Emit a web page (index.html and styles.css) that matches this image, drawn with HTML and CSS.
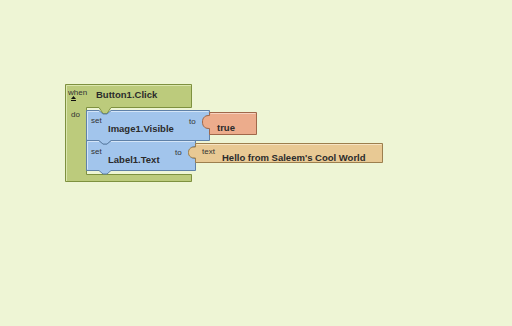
FILE: index.html
```html
<!DOCTYPE html>
<html>
<head>
    <title>Blocks Editor</title>
    <link rel="stylesheet" href="styles.css">
</head>
<body>
    <div class="workspace">
        <svg class="blocks" width="512" height="326" viewBox="0 0 512 326">
            <!-- event block: when Button1.Click do -->
            <path class="event" d="M65.5,84.5 H191.5 V107.5 H111 L107,113.5 H103 L99,107.5 H86.5 V174.5 H191.5 V181.5 H65.5 Z"/>
            <path class="hl-event" d="M66.5,181 V85.5 H191"/>
            <polygon class="arrow" points="71,99 73.5,96 76,99"/>
            <line class="arrow-bar" x1="71" y1="100.5" x2="76" y2="100.5"/>
            <text class="small" x="68" y="95">when</text>
            <text class="name" x="96" y="98">Button1.Click</text>
            <text class="small" x="71" y="117">do</text>

            <!-- set Label1.Text -->
            <path class="setter" d="M86.5,140.5 H99 L103,144 H107 L111,140.5 H195.5 V146.5 C190.5,146.5 189.5,149 189.5,152.5 C189.5,156 190.5,158.5 195.5,158.5 V170.5 H111 L107,174 H103 L99,170.5 H86.5 Z"/>
            <!-- set Image1.Visible -->
            <path class="setter" d="M86.5,110.5 H99 L103,114 H107 L111,110.5 H209.5 V115.5 C204.5,115.5 203.5,118 203.5,122 C203.5,126 204.5,128.5 209.5,128.5 V140.5 H111 L107,144 H103 L99,140.5 H86.5 Z"/>
            <path class="hl-setter" d="M87.5,139.5 V111.5 H99 M111,111.5 H208.5"/>
            <path class="hl-setter" d="M87.5,169.5 V141.5 H99 M111,141.5 H194.5"/>

            <text class="small" x="91" y="123">set</text>
            <text class="name" x="108" y="132">Image1.Visible</text>
            <text class="small" x="189" y="124">to</text>
            <text class="small" x="91" y="154">set</text>
            <text class="name" x="108" y="163">Label1.Text</text>
            <text class="small" x="175" y="155">to</text>

            <!-- text value -->
            <path class="string" d="M195.5,143.5 H382.5 V162.5 H195.5 V158 C191,158 188.5,156.5 188.5,152.5 C188.5,148.5 191,147 195.5,147 Z"/>
            <path class="hl-string" d="M196.5,144.5 H381.5"/>
            <text class="small" x="202" y="154">text</text>
            <text class="name" x="222" y="161">Hello from Saleem's Cool World</text>

            <!-- boolean value -->
            <path class="logic" d="M209.5,112.5 H256.5 V134.5 H209.5 V128.5 C205.5,128.5 202.5,127 202.5,122 C202.5,117 205.5,115.5 209.5,115.5 Z"/>
            <path class="hl-logic" d="M210.5,113.5 H255.5"/>
            <text class="name" x="217" y="131">true</text>
        </svg>
    </div>
</body>
</html>
```

FILE: styles.css
```css
body {
    margin: 0;
    background-color: #eef5d5;
}

.workspace {
    width: 512px;
    height: 326px;
    overflow: hidden;
}

.blocks {
    display: block;
}

.event {
    fill: #bccb7c;
    stroke: #7e913f;
    stroke-width: 1;
}

.hl-event {
    fill: none;
    stroke: #dbe6ae;
}

.setter {
    fill: #a2c5ec;
    stroke: #5f81a8;
    stroke-width: 1;
}

.hl-setter {
    fill: none;
    stroke: #d4e5f7;
}

.string {
    fill: #e8c994;
    stroke: #9c7f4e;
    stroke-width: 1;
}

.hl-string {
    fill: none;
    stroke: #f6e4c4;
}

.logic {
    fill: #ecac8c;
    stroke: #a0684a;
    stroke-width: 1;
}

.hl-logic {
    fill: none;
    stroke: #f7d2c0;
}

.arrow {
    fill: #111;
}

.arrow-bar {
    stroke: #111;
    stroke-width: 1;
}

.small {
    font: 8px "Liberation Sans", Arial, sans-serif;
    fill: #333;
}

.name {
    font: bold 9.5px "Liberation Sans", Arial, sans-serif;
    fill: #2b2b2b;
}
```
